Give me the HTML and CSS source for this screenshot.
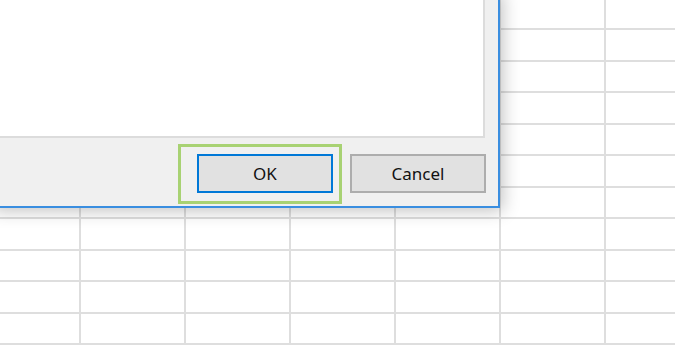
FILE: index.html
```html
<!DOCTYPE html>
<html>
<head>
<meta charset="utf-8">
<link rel="stylesheet" href="styles.css">
</head>
<body>
<div class="sheet">
<div class="cell"></div><div class="cell"></div><div class="cell"></div><div class="cell"></div><div class="cell"></div><div class="cell"></div><div class="cell"></div>
<div class="cell"></div><div class="cell"></div><div class="cell"></div><div class="cell"></div><div class="cell"></div><div class="cell"></div><div class="cell"></div>
<div class="cell"></div><div class="cell"></div><div class="cell"></div><div class="cell"></div><div class="cell"></div><div class="cell"></div><div class="cell"></div>
<div class="cell"></div><div class="cell"></div><div class="cell"></div><div class="cell"></div><div class="cell"></div><div class="cell"></div><div class="cell"></div>
<div class="cell"></div><div class="cell"></div><div class="cell"></div><div class="cell"></div><div class="cell"></div><div class="cell"></div><div class="cell"></div>
<div class="cell"></div><div class="cell"></div><div class="cell"></div><div class="cell"></div><div class="cell"></div><div class="cell"></div><div class="cell"></div>
<div class="cell"></div><div class="cell"></div><div class="cell"></div><div class="cell"></div><div class="cell"></div><div class="cell"></div><div class="cell"></div>
<div class="cell"></div><div class="cell"></div><div class="cell"></div><div class="cell"></div><div class="cell"></div><div class="cell"></div><div class="cell"></div>
<div class="cell"></div><div class="cell"></div><div class="cell"></div><div class="cell"></div><div class="cell"></div><div class="cell"></div><div class="cell"></div>
<div class="cell"></div><div class="cell"></div><div class="cell"></div><div class="cell"></div><div class="cell"></div><div class="cell"></div><div class="cell"></div>
<div class="cell"></div><div class="cell"></div><div class="cell"></div><div class="cell"></div><div class="cell"></div><div class="cell"></div><div class="cell"></div>
</div>
<div class="dialog">
  <div class="panel"></div>
  <div class="actions">
    <button class="btn btn-default">OK<span class="focus-ring"></span></button>
    <button class="btn">Cancel</button>
  </div>
</div>
</body>
</html>
```
FILE: styles.css
```css
html, body {
  margin: 0;
  padding: 0;
  background: #ffffff;
  overflow: hidden;
  width: 675px;
  height: 350px;
}
body {
  position: relative;
  font-family: "Noto Sans", "Open Sans", sans-serif;
}
.sheet {
  width: 675px;
  height: 350px;
  overflow: hidden;
  display: grid;
  grid-template-columns: 81px repeat(6, 105px);
  grid-template-rows: 30px repeat(10, 31.5px);
}
.cell {
  box-sizing: border-box;
  border-right: 2px solid #dedede;
  border-bottom: 2px solid #dedede;
}
.dialog {
  position: absolute;
  left: -10px;
  top: -10px;
  width: 510px;
  height: 218px;
  box-sizing: border-box;
  border: 2px solid #3a8ee0;
  background: #f0f0f0;
  box-shadow: 3px 3px 16px rgba(0, 0, 0, 0.24);
  display: flex;
  flex-direction: column;
  padding: 0 12px 13px 0;
}
.panel {
  height: 146px;
  box-sizing: border-box;
  margin-right: 1px;
  background: #ffffff;
  border: 2px solid #dcdcdc;
}
.actions {
  margin-top: 16px;
  display: flex;
  justify-content: flex-end;
  gap: 17px;
}
.btn {
  position: relative;
  width: 136px;
  height: 39px;
  box-sizing: border-box;
  background: #e1e1e1;
  border: 2px solid #adadad;
  font-family: "Noto Sans", "Open Sans", sans-serif;
  font-size: 17px;
  color: #111111;
  padding: 0;
  margin: 0;
}
.btn-default {
  border-color: #0078d7;
}
.focus-ring {
  position: absolute;
  left: -21px;
  right: -11px;
  top: -12px;
  bottom: -13px;
  border: 3px solid #a8d273;
}
```
